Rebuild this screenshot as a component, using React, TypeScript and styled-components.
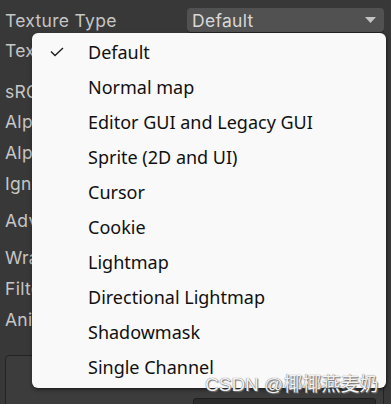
import React from "react";
import styled, { createGlobalStyle } from "styled-components";

const labels: { text: string; top: number }[] = [
  { text: "Texture Shape", top: 0 },
  { text: "sRGB (Color Texture)", top: 11 },
  { text: "Alpha Source", top: 0 },
  { text: "Alpha Is Transparency", top: 1 },
  { text: "Ignore PNG file gamma", top: 1 },
  { text: "Advanced", top: 7 },
  { text: "Wrap Mode", top: 7 },
  { text: "Filter Mode", top: 1 },
  { text: "Aniso Level", top: 1 },
];

const options = [
  "Default",
  "Normal map",
  "Editor GUI and Legacy GUI",
  "Sprite (2D and UI)",
  "Cursor",
  "Cookie",
  "Lightmap",
  "Directional Lightmap",
  "Shadowmask",
  "Single Channel",
];

const App = () => {
  return (
    <>
      <GlobalStyle />
      <Inspector>
        <FieldRow>
          <FieldLabel>Texture Type</FieldLabel>
          <Popup>
            <span>Default</span>
            <svg width="11" height="6" viewBox="0 0 11 6">
              <polygon points="0,0 11,0 5.5,6" fill="#c4c4c4" />
            </svg>
          </Popup>
        </FieldRow>
        {labels.map((l, idx) => (
          <FieldRow key={idx} $top={l.top}>
            <FieldLabel>{l.text}</FieldLabel>
          </FieldRow>
        ))}
        <BottomArea>
          <PreviewBox />
          <ApplyBox />
        </BottomArea>
      </Inspector>

      <Menu>
        {options.map((o, idx) => (
          <MenuItem key={idx}>
            <CheckCell>
              {idx === 0 && (
                <svg width="14" height="10" viewBox="0 0 14 10">
                  <polyline
                    points="1,4.5 5,8.5 13,1"
                    fill="none"
                    stroke="#1a1a1a"
                    strokeWidth="1.3"
                  />
                </svg>
              )}
            </CheckCell>
            <span>{o}</span>
          </MenuItem>
        ))}
      </Menu>

      <Watermark>CSDN @椰椰燕麦奶</Watermark>
    </>
  );
};

const GlobalStyle = createGlobalStyle`
  html, body {
    margin: 0;
    padding: 0;
    background: #383838;
    overflow: hidden;
  }
  #root {
    width: 391px;
    height: 404px;
    position: relative;
  }
`;

const Inspector = styled.div`
  display: flex;
  flex-direction: column;
  padding: 5px 7px 0 5px;
  height: 404px;
  box-sizing: border-box;
`;

const FieldRow = styled.div<{ $top?: number }>`
  display: flex;
  align-items: center;
  height: 30px;
  margin-top: ${(p) => p.$top ?? 0}px;
  flex-shrink: 0;
`;

const FieldLabel = styled.div`
  width: 182px;
  font-family: Inter, "Liberation Sans", sans-serif;
  font-size: 17.5px;
  letter-spacing: 0.3px;
  color: #c6c6c6;
  white-space: nowrap;
`;

const Popup = styled.div`
  flex: 1;
  height: 24px;
  background: #515151;
  border-radius: 4px;
  display: flex;
  align-items: center;
  justify-content: space-between;
  padding: 0 8px 0 5px;
  box-sizing: border-box;
  font-family: Inter, "Liberation Sans", sans-serif;
  font-size: 17.5px;
  letter-spacing: 0.3px;
  color: #d8d8d8;
  box-shadow: 0 1px 0 #242424;
`;

const BottomArea = styled.div`
  display: flex;
  align-items: flex-start;
  margin-top: 21px;
  flex: 1;
  position: relative;
`;

const PreviewBox = styled.div`
  width: 100%;
  height: 60px;
  border: 1px solid #232323;
  border-radius: 4px;
  background: #3c3c3c;
`;

const ApplyBox = styled.div`
  position: absolute;
  left: 188px;
  top: 43px;
  right: 8px;
  height: 20px;
  border: 1px solid #1f1f1f;
  border-radius: 3px;
  background: #2a2a2a;
`;

const Menu = styled.div`
  position: absolute;
  left: 32px;
  top: 33px;
  width: 354px;
  height: 355px;
  box-sizing: border-box;
  padding-top: 1px;
  background: #f9f9f9;
  border-radius: 6px;
  box-shadow: 0 2px 4px rgba(0, 0, 0, 0.35), 1px 1px 2px rgba(0, 0, 0, 0.3);
  display: flex;
  flex-direction: column;
`;

const MenuItem = styled.div`
  display: flex;
  align-items: center;
  height: 35px;
  font-family: "Noto Sans", "Open Sans", sans-serif;
  font-size: 18px;
  color: #101010;
  white-space: nowrap;
`;

const CheckCell = styled.div`
  width: 56px;
  padding-left: 18px;
  box-sizing: border-box;
  display: flex;
  align-items: center;
`;

const Watermark = styled.div`
  position: absolute;
  left: 205px;
  top: 369px;
  font-family: "Liberation Sans", "Noto Sans CJK SC", sans-serif;
  font-size: 19px;
  color: #f2f2f2;
  text-shadow: 0 0 1px #555, 1px 1px 1px #777;
  white-space: nowrap;
`;

export default App;
